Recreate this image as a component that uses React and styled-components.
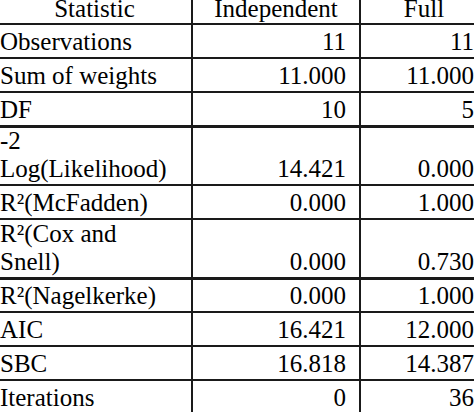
import React from 'react';
import styled, { createGlobalStyle } from 'styled-components';

const Global = createGlobalStyle`
  html, body {
    margin: 0;
    padding: 0;
    background: #ffffff;
    overflow: hidden;
  }
`;

const filas = [
  { stat: 'Observations', ind: '11', full: '11' },
  { stat: 'Sum of weights', ind: '11.000', full: '11.000' },
  { stat: 'DF', ind: '10', full: '5' },
  { stat: <>-2<br />Log(Likelihood)</>, ind: '14.421', full: '0.000', heavy: true },
  { stat: 'R²(McFadden)', ind: '0.000', full: '1.000' },
  { stat: <>R²(Cox and<br />Snell)</>, ind: '0.000', full: '0.730' },
  { stat: 'R²(Nagelkerke)', ind: '0.000', full: '1.000', heavy: true },
  { stat: 'AIC', ind: '16.421', full: '12.000' },
  { stat: 'SBC', ind: '16.818', full: '14.387' },
  { stat: 'Iterations', ind: '0', full: '36' },
];

export default function App() {
  return (
    <>
      <Global />
      <Tabla>
        <Cabecera>Statistic</Cabecera>
        <Cabecera>Independent</Cabecera>
        <Cabecera>Full</Cabecera>
        {filas.map((f, i) => (
          <React.Fragment key={i}>
            <Celda $heavy={f.heavy}>{f.stat}</Celda>
            <Celda $heavy={f.heavy} $num>{f.ind}</Celda>
            <Celda $heavy={f.heavy} $num>{f.full}</Celda>
          </React.Fragment>
        ))}
      </Tabla>
    </>
  );
}

const Tabla = styled.div`
  display: grid;
  grid-template-columns: 193px 166px 126px;
  gap: 2px;
  padding: 2px;
  width: max-content;
  margin: -11px 0 0 -4px;
  background: #1a1a1a;
  font-family: "Liberation Serif", "Times New Roman", serif;
  font-size: 25px;
  color: #000000;
`;

const Cabecera = styled.div`
  background: #ffffff;
  min-height: 32px;
  display: flex;
  align-items: flex-end;
  justify-content: center;
  line-height: 27.5px;
  padding: 0 2px 1px;
  box-sizing: border-box;
`;

const Celda = styled.div`
  background: #ffffff;
  min-height: 32px;
  display: flex;
  align-items: flex-end;
  justify-content: ${(p) => (p.$num ? 'flex-end' : 'flex-start')};
  text-align: ${(p) => (p.$num ? 'right' : 'left')};
  line-height: 27.5px;
  padding: 0 ${(p) => (p.$num ? '13px' : '2px')} 2px 2px;
  box-sizing: border-box;
  box-shadow: ${(p) => (p.$heavy ? 'inset 0 1px 0 #1a1a1a' : 'none')};
`;
